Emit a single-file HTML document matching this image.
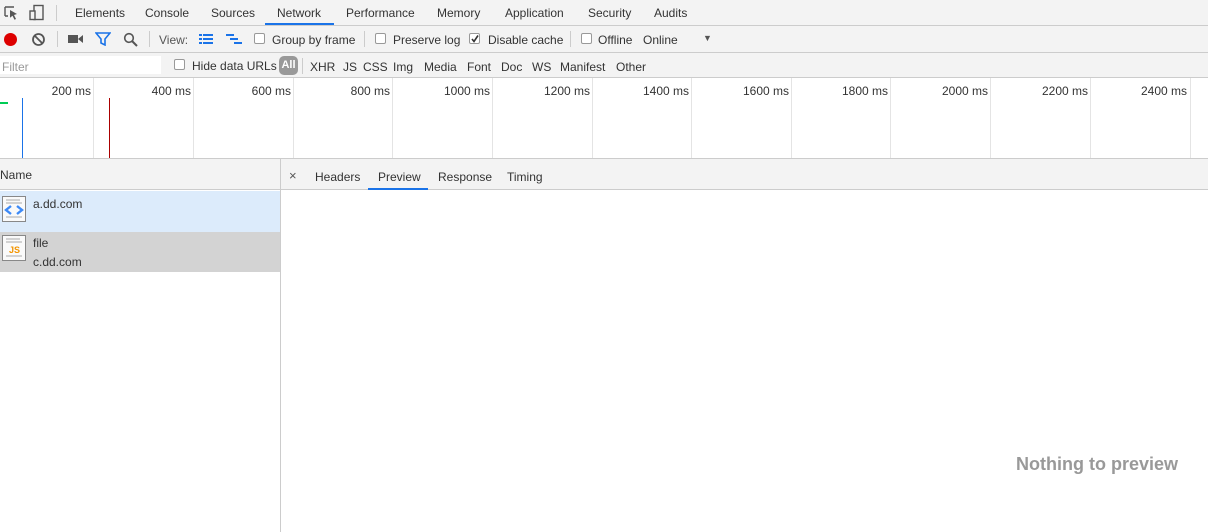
<!DOCTYPE html>
<html><head><meta charset="utf-8"><style>
*{margin:0;padding:0;box-sizing:border-box}
body{width:1208px;height:532px;overflow:hidden;background:#fff;font-family:"Liberation Sans",sans-serif;font-size:12px;color:#333;position:relative}
.a{position:absolute;white-space:nowrap}
.bar{position:absolute;left:0;width:1208px;background:#f3f3f3;border-bottom:1px solid #ccc}
.sep{position:absolute;width:1px;background:#ccc}
.cb{position:absolute;width:11px;height:11px;border:1px solid #999;border-radius:2px;background:#fff}
.g{position:absolute;top:78px;height:80px;width:1px;background:#e4e4e4}
.t{position:absolute;top:84px;font-size:12px;color:#333;text-align:right;width:90px}
</style></head><body>
<div class="bar" style="top:0;height:26px"></div>
<svg class="a" style="left:3px;top:4px" width="44" height="18"><path d="M2 3h9M2 3v9M2 12h3" stroke="#555" fill="none" stroke-width="1.4"/><path d="M7 6l7 4-3 1 2 4-1.5.8-2-4-2.5 2z" fill="#555"/><rect x="31" y="1.5" width="9" height="14" stroke="#555" fill="none" stroke-width="1.4"/><rect x="27" y="7" width="5" height="8.5" stroke="#555" fill="#f3f3f3" stroke-width="1.4"/></svg>
<div class="sep" style="left:56px;top:5px;height:16px"></div>
<div class="a" style="left:75px;top:6px">Elements</div>
<div class="a" style="left:145px;top:6px">Console</div>
<div class="a" style="left:211px;top:6px">Sources</div>
<div class="a" style="left:277px;top:6px">Network</div>
<div class="a" style="left:265px;top:23px;width:69px;height:2px;background:#1a73e8"></div>
<div class="a" style="left:346px;top:6px">Performance</div>
<div class="a" style="left:437px;top:6px">Memory</div>
<div class="a" style="left:505px;top:6px">Application</div>
<div class="a" style="left:588px;top:6px">Security</div>
<div class="a" style="left:654px;top:6px">Audits</div>

<div class="bar" style="top:26px;height:27px"></div>
<div class="a" style="left:4px;top:33px;width:13px;height:13px;border-radius:50%;background:#d00"></div>
<svg class="a" style="left:31px;top:32px" width="15" height="15"><circle cx="7.5" cy="7.5" r="5.5" stroke="#555" stroke-width="1.8" fill="none"/><path d="M3.5 3.5l8 8" stroke="#555" stroke-width="1.8"/></svg>
<div class="sep" style="left:57px;top:31px;height:16px"></div>
<svg class="a" style="left:68px;top:33px" width="16" height="12"><rect x="0" y="2" width="10" height="8" fill="#555"/><path d="M10 6l5-4v8z" fill="#555"/></svg>
<svg class="a" style="left:95px;top:32px" width="16" height="14"><path d="M1 1h14l-5 6v6l-4-2V7z" stroke="#1a73e8" stroke-width="1.6" fill="none"/></svg>
<svg class="a" style="left:123px;top:32px" width="15" height="15"><circle cx="6" cy="6" r="4.3" stroke="#555" stroke-width="1.6" fill="none"/><path d="M9 9l5 5" stroke="#555" stroke-width="2"/></svg>
<div class="sep" style="left:149px;top:31px;height:16px"></div>
<div class="a" style="left:159px;top:33px;color:#555">View:</div>
<svg class="a" style="left:199px;top:34px" width="44" height="11"><g fill="#1a73e8"><rect x="0" y="0" width="3" height="2"/><rect x="4" y="0" width="10" height="2"/><rect x="0" y="4" width="3" height="2"/><rect x="4" y="4" width="10" height="2"/><rect x="0" y="8" width="3" height="2"/><rect x="4" y="8" width="10" height="2"/><rect x="27" y="0" width="8" height="2"/><rect x="31" y="4" width="8" height="2"/><rect x="35" y="8" width="8" height="2"/></g></svg>
<div class="cb" style="left:254px;top:33px"></div>
<div class="a" style="left:272px;top:33px">Group by frame</div>
<div class="sep" style="left:364px;top:31px;height:16px"></div>
<div class="cb" style="left:375px;top:33px"></div>
<div class="a" style="left:393px;top:33px">Preserve log</div>
<div class="cb" style="left:469px;top:33px"></div>
<svg class="a" style="left:470px;top:34px" width="10" height="10"><path d="M2 5l2 2.5 4-6" stroke="#333" stroke-width="1.6" fill="none"/></svg>
<div class="a" style="left:488px;top:33px">Disable cache</div>
<div class="sep" style="left:570px;top:31px;height:16px"></div>
<div class="cb" style="left:581px;top:33px"></div>
<div class="a" style="left:598px;top:33px">Offline</div>
<div class="a" style="left:643px;top:33px">Online</div>
<div class="a" style="left:703px;top:33px;font-size:9px;color:#555">▼</div>

<div class="bar" style="top:53px;height:25px"></div>
<div class="a" style="left:0;top:56px;width:161px;height:18px;background:#fff"></div>
<div class="a" style="left:2px;top:60px;color:#999">Filter</div>
<div class="cb" style="left:174px;top:59px"></div>
<div class="a" style="left:192px;top:59px">Hide data URLs</div>
<div class="a" style="left:279px;top:56px;width:19px;height:19px;border-radius:5px;background:#999;color:#fff;font-weight:bold;font-size:11px;text-align:center;line-height:19px">All</div>
<div class="sep" style="left:302px;top:58px;height:16px"></div>
<div class="a" style="left:310px;top:60px">XHR</div>
<div class="a" style="left:343px;top:60px">JS</div>
<div class="a" style="left:363px;top:60px">CSS</div>
<div class="a" style="left:393px;top:60px">Img</div>
<div class="a" style="left:424px;top:60px">Media</div>
<div class="a" style="left:467px;top:60px">Font</div>
<div class="a" style="left:501px;top:60px">Doc</div>
<div class="a" style="left:532px;top:60px">WS</div>
<div class="a" style="left:560px;top:60px">Manifest</div>
<div class="a" style="left:616px;top:60px">Other</div>

<div class="g" style="left:93px"></div><div class="g" style="left:193px"></div><div class="g" style="left:293px"></div><div class="g" style="left:392px"></div><div class="g" style="left:492px"></div><div class="g" style="left:592px"></div><div class="g" style="left:691px"></div><div class="g" style="left:791px"></div><div class="g" style="left:890px"></div><div class="g" style="left:990px"></div><div class="g" style="left:1090px"></div><div class="g" style="left:1190px"></div>
<div class="t" style="left:1px">200 ms</div><div class="t" style="left:101px">400 ms</div><div class="t" style="left:201px">600 ms</div><div class="t" style="left:300px">800 ms</div><div class="t" style="left:400px">1000 ms</div><div class="t" style="left:500px">1200 ms</div><div class="t" style="left:599px">1400 ms</div><div class="t" style="left:699px">1600 ms</div><div class="t" style="left:798px">1800 ms</div><div class="t" style="left:898px">2000 ms</div><div class="t" style="left:998px">2200 ms</div><div class="t" style="left:1097px">2400 ms</div>
<div class="a" style="left:0;top:102px;width:8px;height:2px;background:#0c5"></div>
<div class="a" style="left:22px;top:98px;width:1px;height:60px;background:#1a73e8"></div>
<div class="a" style="left:109px;top:98px;width:1px;height:60px;background:#a00"></div>
<div class="a" style="left:0;top:158px;width:1208px;height:1px;background:#ccc"></div>

<div class="a" style="left:0;top:159px;width:280px;height:31px;background:#f3f3f3;border-bottom:1px solid #ccc"></div>
<div class="a" style="left:0;top:168px">Name</div>
<div class="a" style="left:281px;top:159px;width:927px;height:31px;background:#f3f3f3;border-bottom:1px solid #ccc"></div>
<div class="a" style="left:289px;top:168px;font-size:13px;color:#555">×</div>
<div class="a" style="left:315px;top:170px">Headers</div>
<div class="a" style="left:378px;top:170px">Preview</div>
<div class="a" style="left:368px;top:188px;width:60px;height:2px;background:#1a73e8"></div>
<div class="a" style="left:438px;top:170px">Response</div>
<div class="a" style="left:507px;top:170px">Timing</div>
<div class="a" style="left:280px;top:159px;width:1px;height:373px;background:#ccc"></div>

<div class="a" style="left:0;top:191px;width:280px;height:41px;background:#dcebfb"></div>
<svg class="a" style="left:2px;top:196px" width="25" height="27"><rect x=".5" y=".5" width="23" height="25" fill="#fafafa" stroke="#888"/><g stroke="#aaa"><path d="M4 4h14M4 7h16M4 21h16"/></g><path d="M9 10l-5 4 5 4M15 10l5 4-5 4" stroke="#3d8af7" stroke-width="2.4" fill="none"/></svg>
<div class="a" style="left:33px;top:197px">a.dd.com</div>
<div class="a" style="left:0;top:232px;width:280px;height:40px;background:#d3d3d3"></div>
<svg class="a" style="left:2px;top:235px" width="25" height="27"><rect x=".5" y=".5" width="23" height="25" fill="#fafafa" stroke="#888"/><g stroke="#aaa"><path d="M4 4h14M4 7h16M4 21h16"/></g><text x="7" y="18" font-size="9" font-weight="bold" fill="#f29400" font-family="Liberation Sans,sans-serif">JS</text></svg>
<div class="a" style="left:33px;top:236px">file</div>
<div class="a" style="left:33px;top:255px">c.dd.com</div>

<div class="a" style="left:1016px;top:454px;font-size:18px;font-weight:bold;color:#999">Nothing to preview</div>
</body></html>
